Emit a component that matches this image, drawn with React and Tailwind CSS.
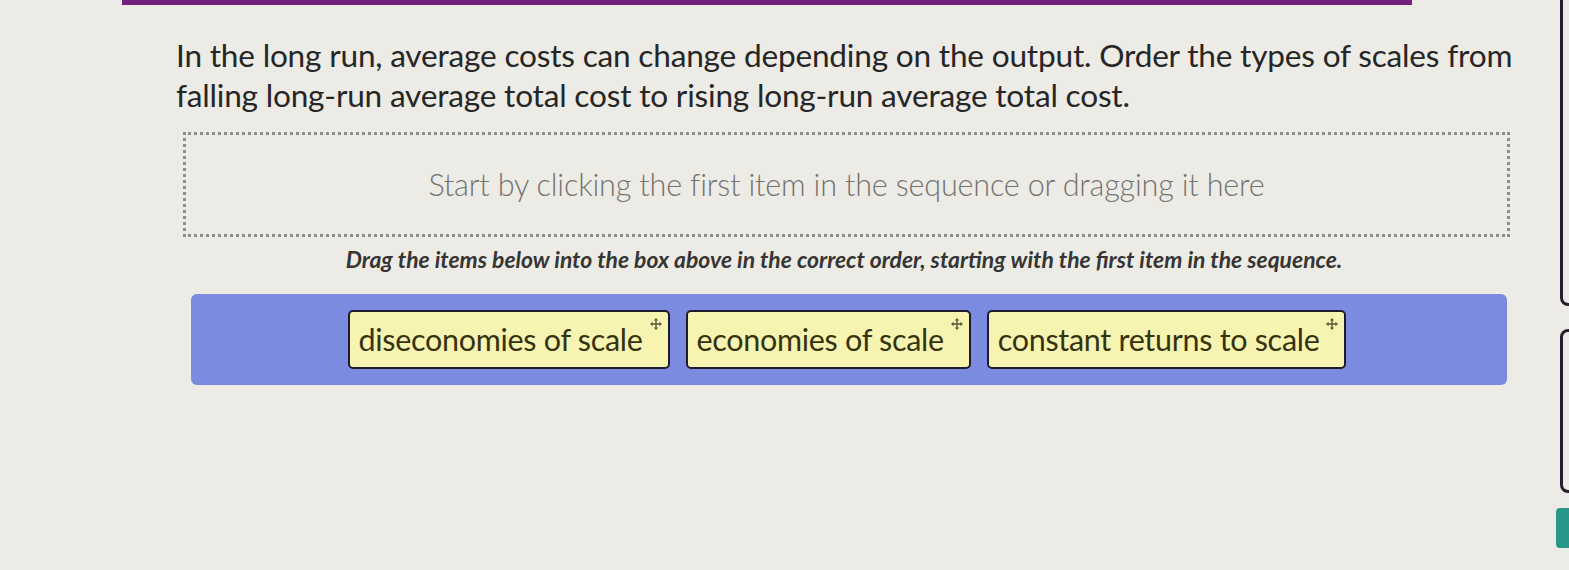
import { useState } from 'react'

const items = ['diseconomies of scale', 'economies of scale', 'constant returns to scale']

function MoveIcon() {
  return (
    <svg width="12" height="12" viewBox="0 0 12 12" className="absolute right-[6px] top-[6px] text-[#5a5838]" fill="currentColor">
      <path d="M6 0 L8.2 2.6 H6.7 V5.3 H9.4 V3.8 L12 6 L9.4 8.2 V6.7 H6.7 V9.4 H8.2 L6 12 L3.8 9.4 H5.3 V6.7 H2.6 V8.2 L0 6 L2.6 3.8 V5.3 H5.3 V2.6 H3.8 Z" />
    </svg>
  )
}

export default function App() {
  const [placed] = useState([])

  return (
    <div className="w-[1569px] h-[570px] overflow-hidden bg-[#ecebe5] font-['Lato',sans-serif] flex">
      {/* main column */}
      <div className="w-[1556px] shrink-0">
        <div className="ml-[122px] w-[1290px] h-[5px] bg-[#73207f]" />

        <div className="pl-[176px] pr-[44px]">
          {/* prompt */}
          <p className="mt-[30px] w-[1360px] text-[31.6px] leading-[40px] text-[#262626] tracking-[-0.2px]">
            In the long run, average costs can change depending on the output. Order the types of scales from falling long-run average total cost to rising long-run average total cost.
          </p>

          {/* drop zone */}
          <div className="mt-[17px] ml-[7px] mr-[2px] h-[105px] border-[3px] border-dotted border-[#8e8d88] flex items-center justify-center">
            {placed.length === 0 && (
              <span className="text-[30.6px] font-light text-[#74736f] tracking-[-0.2px]">
                Start by clicking the first item in the sequence or dragging it here
              </span>
            )}
          </div>

          {/* instruction */}
          <p className="mt-[8px] text-center text-[22.9px] leading-[28px] font-bold italic text-[#363533]">
            Drag the items below into the box above in the correct order, starting with the first item in the sequence.
          </p>

          {/* item bank */}
          <div className="mt-[21px] ml-[15px] mr-[5px] h-[91px] rounded-[6px] bg-[#7b8be0] flex items-center justify-center gap-[16px] pr-[4px]">
            {items.map((item) => (
              <div
                key={item}
                className="relative h-[59px] flex items-center pl-[9px] pr-[25px] bg-[#f7f4b2] border-[2.5px] border-[#1d1b2e] rounded-[5px] text-[30.5px] text-[#35330f] tracking-[-0.3px]"
              >
                {item}
                <MoveIcon />
              </div>
            ))}
          </div>
        </div>
      </div>

      {/* edge of the next panel */}
      <div className="flex-1 flex flex-col pl-[4px]">
        <div className="h-[306px] w-[30px] border-[3px] border-t-0 border-[#2b1d2e] rounded-b-[8px]" />
        <div className="mt-[23px] h-[164px] w-[30px] border-[3px] border-[#2b1d2e] rounded-[8px]" />
        <div className="mt-[15px] -ml-[4px] h-[40px] w-[30px] bg-[#27978a] rounded-[4px]" />
      </div>
    </div>
  )
}
